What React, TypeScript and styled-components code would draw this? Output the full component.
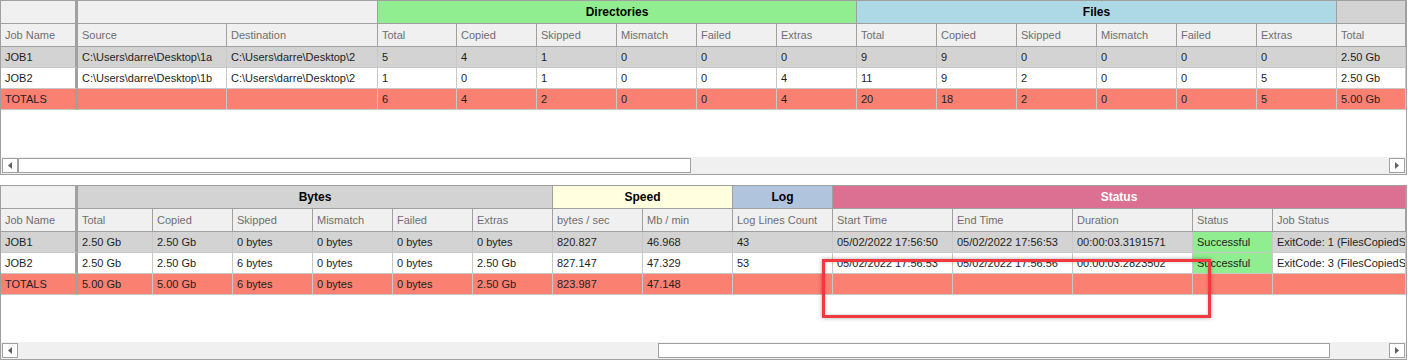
import React from 'react'
import styled, { createGlobalStyle, css } from 'styled-components'

const GlobalStyle = createGlobalStyle`
  html, body {
    margin: 0;
    padding: 0;
    background: #ffffff;
  }
  body {
    font-family: 'Liberation Sans', Arial, sans-serif;
    font-size: 11px;
    color: #1e1e1e;
  }
`

type Tone = 'odd' | 'even' | 'total'

interface Band {
  title: string
  span: number
  bg: string
  light?: boolean
}

interface Row {
  tone: Tone
  cells: string[]
  ok?: number[]
}

interface GridSpec {
  widths: number[]
  bands: Band[]
  headers: string[]
  rows: Row[]
  thumbLeft: number
  thumbWidth: number
}

const Page = styled.div`
  position: relative;
  width: 1408px;
  height: 360px;
  overflow: hidden;
`

const Panel = styled.div<{ $gap?: boolean }>`
  width: 1407px;
  height: 175px;
  box-sizing: border-box;
  border: 1px solid #a0a0a0;
  display: flex;
  flex-direction: column;
  margin-top: ${p => (p.$gap ? '10px' : '0')};
`

const GridArea = styled.div`
  flex: 1;
  overflow: hidden;
  background: #ffffff;
`

const Table = styled.div<{ $cols: string }>`
  display: grid;
  grid-template-columns: ${p => p.$cols};
  grid-auto-rows: auto;
`

const cellBase = css`
  box-sizing: border-box;
  white-space: nowrap;
  overflow: hidden;
  padding-left: 4px;
  display: flex;
  align-items: center;
`

const BandCell = styled.div<{ $span: number; $bg: string; $light?: boolean; $first?: boolean }>`
  ${cellBase};
  grid-column: span ${p => p.$span};
  height: 23px;
  justify-content: center;
  padding-left: 0;
  background: ${p => p.$bg};
  color: ${p => (p.$light ? '#ffffff' : '#000000')};
  font-weight: 700;
  font-size: 12px;
  border-right: ${p => (p.$first ? '3px solid #a0a0a0' : '1px solid #a0a0a0')};
  border-bottom: 1px solid #a0a0a0;
`

const HeadCell = styled.div<{ $first?: boolean }>`
  ${cellBase};
  height: 23px;
  background: #f0f0f0;
  color: #6e6e6e;
  border-right: ${p => (p.$first ? '3px solid #a0a0a0' : '1px solid #a0a0a0')};
  border-bottom: 1px solid #a0a0a0;
`

const toneBg: Record<Tone, string> = {
  odd: '#d3d3d3',
  even: '#ffffff',
  total: '#fa8072',
}

const DataCell = styled.div<{ $tone: Tone; $ok?: boolean; $first?: boolean }>`
  ${cellBase};
  height: 21px;
  background: ${p => (p.$ok ? '#90ee90' : toneBg[p.$tone])};
  color: #1e1e1e;
  border-right: ${p => (p.$first ? '3px solid #a0a0a0' : '1px solid #c8c8c8')};
  border-bottom: 1px solid #c8c8c8;
`

const ScrollBar = styled.div`
  height: 17px;
  box-sizing: border-box;
  padding: 1px;
  background: #f0f0f0;
  display: flex;
  align-items: stretch;
`

const ArrowButton = styled.div`
  width: 16px;
  box-sizing: border-box;
  border: 1px solid #a0a0a0;
  background: #ffffff;
  display: flex;
  align-items: center;
  justify-content: center;
`

const Track = styled.div`
  flex: 1;
  display: flex;
  align-items: stretch;
`

const Thumb = styled.div<{ $left: number; $width: number }>`
  margin-left: ${p => p.$left}px;
  width: ${p => p.$width}px;
  box-sizing: border-box;
  border: 1px solid #a0a0a0;
  background: #ffffff;
`

const Callout = styled.div`
  position: absolute;
  left: 822px;
  top: 259px;
  width: 389px;
  height: 59px;
  box-sizing: border-box;
  border: 3px solid #f2393f;
  box-shadow: 0 0 4px rgba(0, 0, 0, 0.35), inset 0 0 3px rgba(0, 0, 0, 0.25);
  pointer-events: none;
`

const Arrow: React.FC<{ dir: 'left' | 'right' }> = ({ dir }) => (
  <svg width="4" height="7" viewBox="0 0 4 7">
    {dir === 'left' ? (
      <polygon points="4,0 0,3.5 4,7" fill="#606060" />
    ) : (
      <polygon points="0,0 4,3.5 0,7" fill="#606060" />
    )}
  </svg>
)

const DataGrid: React.FC<{ spec: GridSpec; gap?: boolean }> = ({ spec, gap }) => {
  const cols = spec.widths.map(w => (w > 0 ? `${w}px` : '1fr')).join(' ')
  return (
    <Panel $gap={gap}>
      <GridArea>
        <Table $cols={cols}>
          {spec.bands.map((b, i) => (
            <BandCell key={'b' + i} $span={b.span} $bg={b.bg} $light={b.light} $first={i === 0}>
              {b.title}
            </BandCell>
          ))}
          {spec.headers.map((h, i) => (
            <HeadCell key={'h' + i} $first={i === 0}>
              {h}
            </HeadCell>
          ))}
          {spec.rows.map((row, r) =>
            row.cells.map((c, i) => (
              <DataCell
                key={`r${r}c${i}`}
                $tone={row.tone}
                $ok={row.ok?.includes(i)}
                $first={i === 0}
              >
                {c}
              </DataCell>
            ))
          )}
        </Table>
      </GridArea>
      <ScrollBar>
        <ArrowButton>
          <Arrow dir="left" />
        </ArrowButton>
        <Track>
          <Thumb $left={spec.thumbLeft} $width={spec.thumbWidth} />
        </Track>
        <ArrowButton>
          <Arrow dir="right" />
        </ArrowButton>
      </ScrollBar>
    </Panel>
  )
}

const summary: GridSpec = {
  widths: [77, 149, 151, 79, 80, 80, 80, 80, 80, 80, 80, 80, 80, 80, 80, 0],
  bands: [
    { title: '', span: 1, bg: '#f0f0f0' },
    { title: '', span: 2, bg: '#f0f0f0' },
    { title: 'Directories', span: 6, bg: '#90ee90' },
    { title: 'Files', span: 6, bg: '#add8e6' },
    { title: '', span: 1, bg: '#d3d3d3' },
  ],
  headers: [
    'Job Name', 'Source', 'Destination',
    'Total', 'Copied', 'Skipped', 'Mismatch', 'Failed', 'Extras',
    'Total', 'Copied', 'Skipped', 'Mismatch', 'Failed', 'Extras',
    'Total',
  ],
  rows: [
    {
      tone: 'odd',
      cells: ['JOB1', 'C:\\Users\\darre\\Desktop\\1a', 'C:\\Users\\darre\\Desktop\\2',
        '5', '4', '1', '0', '0', '0', '9', '9', '0', '0', '0', '0', '2.50 Gb'],
    },
    {
      tone: 'even',
      cells: ['JOB2', 'C:\\Users\\darre\\Desktop\\1b', 'C:\\Users\\darre\\Desktop\\2',
        '1', '0', '1', '0', '0', '4', '11', '9', '2', '0', '0', '5', '2.50 Gb'],
    },
    {
      tone: 'total',
      cells: ['TOTALS', '', '', '6', '4', '2', '0', '0', '4', '20', '18', '2', '0', '0', '5', '5.00 Gb'],
    },
  ],
  thumbLeft: 0,
  thumbWidth: 673,
}

const details: GridSpec = {
  widths: [77, 75, 80, 80, 80, 80, 80, 90, 90, 100, 120, 120, 120, 80, 0],
  bands: [
    { title: '', span: 1, bg: '#f0f0f0' },
    { title: 'Bytes', span: 6, bg: '#d3d3d3' },
    { title: 'Speed', span: 2, bg: '#ffffe0' },
    { title: 'Log', span: 1, bg: '#b0c4de' },
    { title: 'Status', span: 5, bg: '#db7093', light: true },
  ],
  headers: [
    'Job Name', 'Total', 'Copied', 'Skipped', 'Mismatch', 'Failed', 'Extras',
    'bytes / sec', 'Mb / min', 'Log Lines Count',
    'Start Time', 'End Time', 'Duration', 'Status', 'Job Status',
  ],
  rows: [
    {
      tone: 'odd',
      cells: ['JOB1', '2.50 Gb', '2.50 Gb', '0 bytes', '0 bytes', '0 bytes', '0 bytes',
        '820.827', '46.968', '43', '05/02/2022 17:56:50', '05/02/2022 17:56:53',
        '00:00:03.3191571', 'Successful', 'ExitCode: 1 (FilesCopiedSuccessful)'],
      ok: [13],
    },
    {
      tone: 'even',
      cells: ['JOB2', '2.50 Gb', '2.50 Gb', '6 bytes', '0 bytes', '0 bytes', '2.50 Gb',
        '827.147', '47.329', '53', '05/02/2022 17:56:53', '05/02/2022 17:56:56',
        '00:00:03.2823502', 'Successful', 'ExitCode: 3 (FilesCopiedSuccessful)'],
      ok: [13],
    },
    {
      tone: 'total',
      cells: ['TOTALS', '5.00 Gb', '5.00 Gb', '6 bytes', '0 bytes', '0 bytes', '2.50 Gb',
        '823.987', '47.148', '', '', '', '', '', ''],
    },
  ],
  thumbLeft: 640,
  thumbWidth: 672,
}

export default function App() {
  return (
    <Page>
      <GlobalStyle />
      <DataGrid spec={summary} />
      <DataGrid spec={details} gap />
      <Callout />
    </Page>
  )
}
